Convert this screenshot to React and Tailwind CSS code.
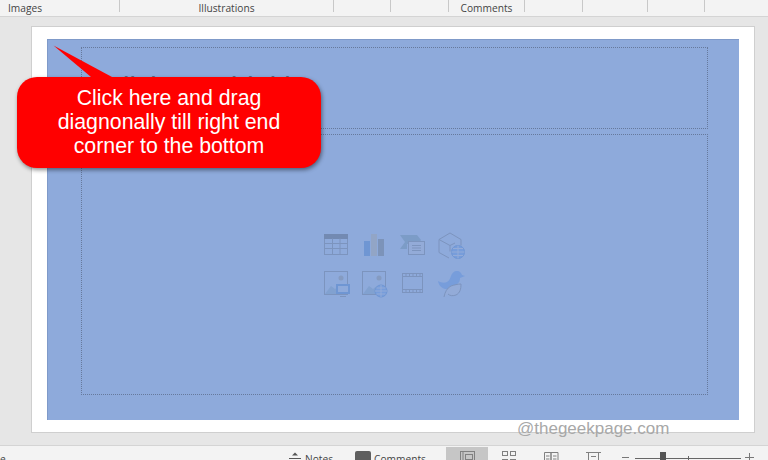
const ribbonGroups = [
  { label: "Images", width: "w-[120px]", align: "justify-start pl-2" },
  { label: "Illustrations", width: "w-[214px]", align: "justify-center" },
  { label: "", width: "w-[57px]", align: "justify-center" },
  { label: "", width: "w-[58px]", align: "justify-center" },
  { label: "Comments", width: "w-[76px]", align: "justify-center" },
  { label: "", width: "w-[58px]", align: "justify-center" },
  { label: "", width: "w-[65px]", align: "justify-center" },
  { label: "", width: "w-[57px]", align: "justify-center" },
];

function TableIcon() {
  return (
    <svg width="28" height="28" viewBox="0 0 28 28" fill="none" stroke="#7a91ba" strokeWidth="1">
      <rect x="1.500" y="2.500" width="23" height="20" />
      <rect x="1.500" y="2.500" width="23" height="4" fill="#6f85ab" stroke="#6f85ab" />
      <path d="M1.500 11.500h23M1.500 16.500h23M9.500 6.500v16M17 6.500v16" />
    </svg>
  );
}

function ChartIcon() {
  return (
    <svg width="28" height="28" viewBox="0 0 28 28">
      <rect x="3" y="9" width="6" height="15" fill="#6a93d2" />
      <rect x="10" y="2" width="6" height="22" fill="#93a5c3" />
      <rect x="17" y="7" width="6" height="17" fill="#7a8fb4" />
    </svg>
  );
}

function SmartArtIcon() {
  return (
    <svg width="28" height="28" viewBox="0 0 28 28" fill="none">
      <path d="M1 3h17l4 5-3 4H8v5H1l5-7z" fill="#7a9ac4" />
      <rect x="9.500" y="9.500" width="16" height="13" fill="#95acd8" stroke="#7a91ba" />
      <path d="M13 13.500h9M13 16h9M13 18.500h9" stroke="#7a91ba" />
    </svg>
  );
}

function ModelIcon() {
  return (
    <svg width="28" height="28" viewBox="0 0 28 28" fill="none" stroke="#7a91ba">
      <path d="M2 7.500 13 1l11 6.500v6M2 7.500v13l10 5.500M2 7.500l11 6 5-2.500M13 13.500v6" />
      <circle cx="21" cy="20" r="6.500" fill="#739bdb" stroke="#6a93d2" />
      <path d="M14.500 20h13M21 13.500v13M16 16.500h10M16 23.500h10" stroke="#95acd8" />
    </svg>
  );
}

function PictureIcon({ children }) {
  return (
    <svg width="28" height="28" viewBox="0 0 28 28" fill="none">
      <rect x="1.500" y="1.500" width="23" height="23" stroke="#7a91ba" />
      <circle cx="18" cy="8" r="2.500" fill="#8499bd" />
      <path d="M2 24l6-8 4 3 4-3 8 8z" fill="#7fa0cf" />
      {children}
    </svg>
  );
}

function FilmIcon() {
  return (
    <svg width="28" height="28" viewBox="0 0 28 28" fill="none" stroke="#7a91ba">
      <rect x="3.500" y="3.500" width="20" height="19" />
      <path d="M3.500 6.500h20M3.500 19.500h20M7 3.500v3M10.500 3.500v3M14 3.500v3M17.500 3.500v3M21 3.500v3M7 19.500v3M10.500 19.500v3M14 19.500v3M17.500 19.500v3M21 19.500v3" />
    </svg>
  );
}

function BirdIcon() {
  return (
    <svg width="28" height="28" viewBox="0 0 28 28" fill="none">
      <path d="M1 11c3 2 7 2 9 1 2-1 3-3 4-6 1-3 3-5 6-5 3 0 4 2 5 4l3 1-5 2c0 3-1 5-3 6l-7 5c-6 1-11-2-12-8z" fill="#739bdb" />
      <path d="M7 27c1-5 3-9 7-11 3-1 7-2 10-2 0 5-1 9-5 11-3 1-6 1-8-1" fill="#95acd8" stroke="#7a91ba" />
    </svg>
  );
}

function ViewIcon({ children, active }) {
  return (
    <div className={`w-[42px] h-[14px] mt-px flex justify-center pt-[4px] ${active ? "bg-[#c6c6c6]" : ""}`}>
      <svg width="15" height="15" viewBox="0 0 15 15" fill="none" stroke="#808080">
        {children}
      </svg>
    </div>
  );
}

export default function App() {
  return (
    <div className="relative w-[768px] h-[460px] overflow-hidden flex flex-col bg-[#e6e6e6] font-['Open_Sans',sans-serif]">
      {/* ribbon group labels */}
      <div className="h-[17px] shrink-0 flex bg-[#f3f3f3] border-b border-[#d4d4d4]">
        {ribbonGroups.map((g, i) => (
          <div key={i} className={`${g.width} h-[12px] flex items-center ${g.align} border-r border-[#c8c8c8]`}>
            <span className="text-[10.2px] leading-[16px] mt-[3px] text-[#444444]">{g.label}</span>
          </div>
        ))}
      </div>

      {/* slide area */}
      <div className="h-[428px] shrink-0 pt-[9px] pl-[31px]">
        <div className="w-[724px] h-[407px] bg-white border border-[#cfcfcf] pt-[12px] pl-[15px]">
          <div className="w-[692px] h-[381px] bg-[#8eaadb] border-t border-l border-[#7f9ac9] pt-[7px] pl-[33px] flex flex-col gap-[5px]">
            <div className="w-[627px] h-[82px] shrink-0 border border-dotted border-[#66799c] overflow-hidden pl-[20px] pt-[20px]">
              <div className="text-[29px] leading-[40px] text-[#5a6885] font-['Liberation_Sans',sans-serif]">Click to add title</div>
            </div>
            <div className="w-[627px] h-[261px] shrink-0 border border-dotted border-[#66799c] flex items-center justify-center pr-[2px]">
              <div className="grid grid-cols-4 gap-[10px] opacity-85">
                <TableIcon />
                <ChartIcon />
                <SmartArtIcon />
                <ModelIcon />
                <PictureIcon>
                  <rect x="14" y="15" width="12" height="8" fill="#8eaadb" stroke="#6a93d2" strokeWidth="2" />
                  <path d="M17 26.500h6" stroke="#7a91ba" />
                </PictureIcon>
                <PictureIcon>
                  <circle cx="20" cy="21" r="6" fill="#739bdb" stroke="#6a93d2" />
                  <path d="M14 21h12M20 15v12M15.500 18h9M15.500 24h9" stroke="#95acd8" />
                </PictureIcon>
                <FilmIcon />
                <BirdIcon />
              </div>
            </div>
          </div>
        </div>
      </div>

      {/* status bar */}
      <div className="h-[15px] shrink-0 flex items-start bg-[#f3f3f3] border-t border-[#d4d4d4] text-[10.2px] leading-[16px] text-[#444444]">
        <span className="w-[289px] mt-[5px]">e</span>
        <svg className="mt-[6px]" width="12" height="8" viewBox="0 0 12 8">
          <path d="M3 3.500 6 0.500l3 3z" fill="#555555" />
          <path d="M0 6.500h12" stroke="#555555" />
        </svg>
        <span className="ml-[4px] w-[50px] mt-[5px]">Notes</span>
        <div className="w-[16px] h-[14px] mt-[5px] rounded-[2px] bg-[#5f5f5f]" />
        <span className="ml-[2px] w-[73px] mt-[5px] pl-px">Comments</span>
        <ViewIcon active>
          <rect x="0.500" y="0.500" width="14" height="14" />
          <rect x="5.500" y="3.500" width="7" height="5" />
          <path d="M3 0.500v14" />
        </ViewIcon>
        <ViewIcon>
          <rect x="0.500" y="0.500" width="5" height="4" />
          <rect x="8.500" y="0.500" width="5" height="4" />
          <rect x="0.500" y="8.500" width="5" height="4" />
          <rect x="8.500" y="8.500" width="5" height="4" />
        </ViewIcon>
        <ViewIcon>
          <path d="M0.500 1.500h6.500v13h-6.500zM7 1.500h7v13h-7zM2 5h3.500M2 8h3.500M9 5h3.500M9 8h3.500" />
        </ViewIcon>
        <ViewIcon>
          <path d="M0 1.500h15M2.500 1.500v11h10v-11M5 5.500h5" />
        </ViewIcon>
        <div className="relative w-[146px] h-[15px]">
          <div className="absolute left-[8px] top-[11px] w-[7px] h-px bg-[#777777]" />
          <div className="absolute left-[21px] top-[12px] w-[106px] h-px bg-[#666666]" />
          <div className="absolute left-[46px] top-[6px] w-[6px] h-[9px] bg-[#555555]" />
          <div className="absolute left-[74px] top-[10px] w-px h-[5px] bg-[#666666]" />
          <div className="absolute left-[131px] top-[11px] w-[9px] h-px bg-[#777777]" />
          <div className="absolute left-[135px] top-[7px] w-px h-[8px] bg-[#777777]" />
        </div>
      </div>

      {/* red callout */}
      <div className="absolute left-[17px] top-[77px] w-[304px] h-[91px] rounded-[20px] bg-[#ff0000] shadow-[1px_2px_4px_rgba(0,0,0,0.45)] flex flex-col items-center justify-center pb-[2px] text-white text-[21.3px] leading-[24px] font-['Liberation_Sans',sans-serif]">
        <svg className="absolute left-[36px] top-[-32px]" width="60" height="33" viewBox="0 0 60 33">
          <path d="M0.500 0.500 38 32h21z" fill="#ff0000" />
        </svg>
        <span>Click here and drag</span>
        <span>diagnonally till right end</span>
        <span>corner to the bottom</span>
      </div>

      {/* watermark */}
      <div className="absolute left-[517px] top-[417px] text-[17px] leading-[24px] text-[#a8a8a8] font-['Liberation_Sans',sans-serif]">
        @thegeekpage.com
      </div>
    </div>
  );
}
